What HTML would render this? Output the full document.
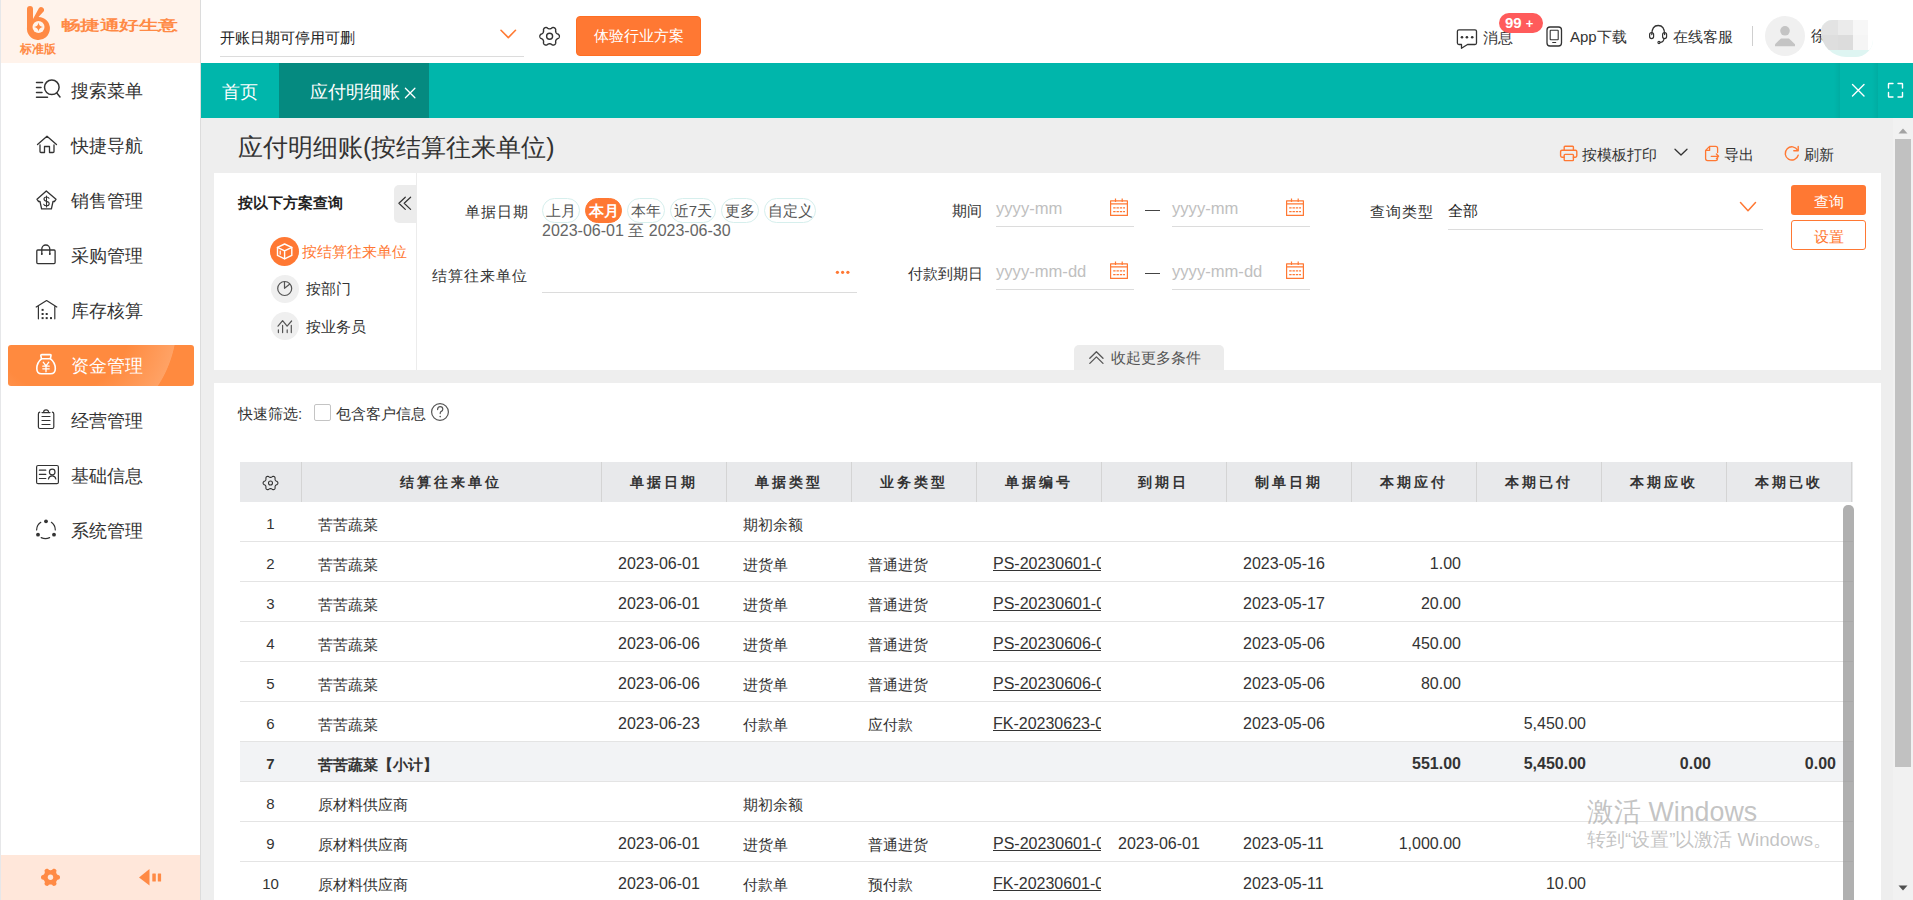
<!DOCTYPE html>
<html><head><meta charset="utf-8">
<style>
*{box-sizing:border-box;margin:0;padding:0}
html,body{width:1913px;height:900px;overflow:hidden}
body{position:relative;background:#eeeeee;font-family:"Liberation Sans",sans-serif;color:#333;font-size:15px}
.a{position:absolute;white-space:nowrap}
#sb{position:absolute;left:0;top:0;width:201px;height:900px;background:#fff;border-right:1px solid #dcdcdc}
#logo{position:absolute;left:0;top:0;width:200px;height:63px;background:#fff3eb}
.mi{position:absolute;left:0;width:200px;height:41px}
.mi .t{position:absolute;left:71px;top:1px;font-size:18px;color:#333;line-height:22px}
.mi svg{position:absolute;left:34px;top:8px}
#sbb{position:absolute;left:0;top:855px;width:200px;height:45px;background:#ffe7da}
#hd{position:absolute;left:201px;top:0;width:1712px;height:63px;background:#fff}
#tabs{position:absolute;left:201px;top:63px;width:1712px;height:55px;background:#00b6ab}
.panel{position:absolute;background:#fff}
.lbl{position:absolute;font-size:15px;color:#333;line-height:20px;white-space:nowrap}
.ul{position:absolute;height:1px;background:#dcdcdc}
.ph{position:absolute;font-size:16.6px;color:#c0c0c0;line-height:20px;padding-top:1px;white-space:nowrap}
.chip{position:absolute;top:198px;height:25px;border:1px solid #d6efed;border-radius:13px;font-size:15px;line-height:23px;color:#555;text-align:center}
.th{position:absolute;top:462px;height:40px;line-height:40px;text-align:center;font-size:14px;font-weight:bold;color:#333;letter-spacing:3px;white-space:nowrap}
.td{position:absolute;height:40px;line-height:40px;padding-top:3px;font-size:15px;color:#333;white-space:nowrap}
.num{font-size:16px;padding-top:2px}
</style></head><body>

<!-- SIDEBAR -->
<div id="sb">
  <div id="logo">
    <div class="a" style="left:61px;top:14px;font-size:19px;font-weight:bold;color:#ff8a45;line-height:24px;transform-origin:0 50%;transform:scale(1.02,0.72)">畅捷通好生意</div>
    <div class="a" style="left:20px;top:41px;font-size:12px;font-weight:bold;color:#ff8a45;line-height:16px">标准版</div>
  </div>
  <div class="a" style="left:8px;top:345px;width:186px;height:41px;border-radius:3px;background:radial-gradient(circle 116.4px at 52.8px -22.6px,#ff8a3f 0px,#ff8a3f 70px,#ffa265 115.6px,#ff8a3f 116.4px)"></div>
  <div class="mi" style="top:79px"><div class="t">搜索菜单</div></div>
  <div class="mi" style="top:134px"><div class="t">快捷导航</div></div>
  <div class="mi" style="top:189px"><div class="t">销售管理</div></div>
  <div class="mi" style="top:244px"><div class="t">采购管理</div></div>
  <div class="mi" style="top:299px"><div class="t">库存核算</div></div>
  <div class="mi" style="top:354px"><div class="t" style="color:#fff">资金管理</div></div>
  <div class="mi" style="top:409px"><div class="t">经营管理</div></div>
  <div class="mi" style="top:464px"><div class="t">基础信息</div></div>
  <div class="mi" style="top:519px"><div class="t">系统管理</div></div>
  <div id="sbb"></div>
</div>

<!-- HEADER -->
<div id="hd">
  <div class="a" style="left:19px;top:28px;font-size:15px;color:#222;line-height:20px">开账日期可停用可删</div>
  <div class="a" style="left:19px;top:56px;width:304px;height:1px;background:#dcdcdc"></div>
  <div class="a" style="left:375px;top:16px;width:125px;height:40px;background:#ff7833;border:1px solid #ff6e22;border-radius:4px;color:#fff;font-size:15px;line-height:38px;text-align:center">体验行业方案</div>
  <div class="a" style="left:1282px;top:28px;font-size:15px;color:#333;line-height:20px">消息</div>
  <div class="a" style="left:1298px;top:13px;width:44px;height:20px;background:#ff5b5b;border-radius:10px;color:#fff;font-size:15px;font-weight:bold;line-height:20px;text-align:left;padding-left:6px">99<span style="font-size:13px;margin-left:4px">+</span></div>
  <div class="a" style="left:1369px;top:27px;font-size:15px;color:#333;line-height:20px">App下载</div>
  <div class="a" style="left:1472px;top:27px;font-size:15px;color:#333;line-height:20px">在线客服</div>
  <div class="a" style="left:1551px;top:26px;width:1px;height:20px;background:#cfcfcf"></div>
  <div class="a" style="left:1564px;top:16px;width:40px;height:40px;border-radius:20px;background:#f0f0f0"></div>
  <div class="a" style="left:1610px;top:26px;font-size:15px;color:#333;line-height:20px">徐</div>
  <div class="a" style="left:1620px;top:20px;width:52px;height:37px;border-radius:12px 0 18px 26px;overflow:hidden;background:#def5f2">
    <div class="a" style="left:0;top:0;width:17px;height:15px;background:#e3e3e3"></div>
    <div class="a" style="left:17px;top:0;width:15px;height:15px;background:#ebebeb"></div>
    <div class="a" style="left:32px;top:0;width:15px;height:15px;background:#f7f7f7"></div>
    <div class="a" style="left:0;top:15px;width:17px;height:15px;background:#dedede"></div>
    <div class="a" style="left:17px;top:15px;width:15px;height:15px;background:#dcdcdc"></div>
    <div class="a" style="left:32px;top:15px;width:15px;height:15px;background:#f5f5f5"></div>
    <div class="a" style="left:47px;top:0;width:5px;height:30px;background:#fff"></div>
  </div>
</div>

<!-- TABS -->
<div id="tabs">
  <div class="a" style="left:21px;top:17px;font-size:18px;color:#fff;line-height:24px">首页</div>
  <div class="a" style="left:78px;top:0;width:150px;height:55px;background:#058a80"></div>
  <div class="a" style="left:1633px;top:0;width:6px;height:55px;background:linear-gradient(90deg,rgba(0,0,0,0),rgba(0,0,0,0.05))"></div>
  <div class="a" style="left:1671px;top:0;width:6px;height:55px;background:linear-gradient(90deg,rgba(0,0,0,0),rgba(0,0,0,0.05))"></div>
  <div class="a" style="left:109px;top:17px;font-size:18px;color:#fff;line-height:24px">应付明细账</div>
</div>

<!-- CONTENT -->
<div class="a" style="left:238px;top:130px;font-size:25px;color:#333;line-height:34px">应付明细账(按结算往来单位)</div>

<div class="panel" style="left:214px;top:173px;width:1667px;height:197px"></div>
<!-- FILTER PANEL -->
<div class="a" style="left:416px;top:173px;width:1px;height:197px;background:#ececec"></div>
<div class="lbl" style="left:238px;top:193px;font-weight:bold;color:#222">按以下方案查询</div>
<div class="a" style="left:394px;top:185px;width:22px;height:38px;background:#ececec;border-radius:5px 0 0 5px"></div>
<div class="a" style="left:270px;top:237px;width:29px;height:29px;border-radius:50%;background:#ff7833"></div>
<div class="lbl" style="left:302px;top:242px;color:#ff7833">按结算往来单位</div>
<div class="a" style="left:271px;top:275px;width:28px;height:28px;border-radius:50%;background:#efefef"></div>
<div class="lbl" style="left:306px;top:279px;color:#333">按部门</div>
<div class="a" style="left:271px;top:312px;width:28px;height:28px;border-radius:50%;background:#efefef"></div>
<div class="lbl" style="left:306px;top:317px;color:#333">按业务员</div>

<div class="lbl" style="left:465px;top:202px;letter-spacing:1px">单据日期</div>
<div class="chip" style="left:542px;width:38px">上月</div>
<div class="chip" style="left:585px;width:37px;background:#ff7833;border-color:#ff7833;color:#fff;font-weight:bold">本月</div>
<div class="chip" style="left:627px;width:38px">本年</div>
<div class="chip" style="left:670px;width:46px">近7天</div>
<div class="chip" style="left:721px;width:38px">更多</div>
<div class="chip" style="left:764px;width:52px">自定义</div>
<div class="lbl" style="left:542px;top:221px;font-size:16px;color:#666">2023-06-01 至 2023-06-30</div>

<div class="lbl" style="left:432px;top:266px;letter-spacing:1px">结算往来单位</div>
<div class="ul" style="left:542px;top:292px;width:315px"></div>

<div class="lbl" style="left:952px;top:201px">期间</div>
<div class="ph" style="left:996px;top:198px">yyyy-mm</div>
<div class="ul" style="left:996px;top:226px;width:138px"></div>
<div class="a" style="left:1145px;top:210px;width:15px;height:1px;background:#444"></div>
<div class="ph" style="left:1172px;top:198px">yyyy-mm</div>
<div class="ul" style="left:1172px;top:226px;width:138px"></div>

<div class="lbl" style="left:908px;top:264px">付款到期日</div>
<div class="ph" style="left:996px;top:261px">yyyy-mm-dd</div>
<div class="ul" style="left:996px;top:289px;width:138px"></div>
<div class="a" style="left:1145px;top:273px;width:15px;height:1px;background:#444"></div>
<div class="ph" style="left:1172px;top:261px">yyyy-mm-dd</div>
<div class="ul" style="left:1172px;top:289px;width:138px"></div>

<div class="lbl" style="left:1370px;top:202px;letter-spacing:1px">查询类型</div>
<div class="lbl" style="left:1448px;top:201px;color:#222">全部</div>
<div class="ul" style="left:1448px;top:229px;width:315px"></div>

<div class="a" style="left:1791px;top:185px;width:75px;height:30px;background:#ff7833;border-radius:3px;color:#fff;font-size:15px;line-height:30px;padding-top:2px;text-align:center">查询</div>
<div class="a" style="left:1791px;top:220px;width:75px;height:30px;background:#fff;border:1px solid #ff7833;border-radius:3px;color:#ff7833;font-size:15px;line-height:28px;padding-top:2px;text-align:center">设置</div>

<div class="a" style="left:1074px;top:345px;width:150px;height:25px;background:#ececec;border-radius:5px 5px 0 0"></div>
<div class="lbl" style="left:1111px;top:348px;font-size:15px;color:#555">收起更多条件</div>

<!-- toolbar -->
<div class="lbl" style="left:1582px;top:145px;color:#333">按模板打印</div>
<div class="lbl" style="left:1724px;top:145px;color:#333">导出</div>
<div class="lbl" style="left:1804px;top:145px;color:#333">刷新</div>
<div class="panel" style="left:214px;top:383px;width:1667px;height:517px"></div>
<!-- TABLE PANEL -->
<div class="lbl" style="left:238px;top:404px;font-size:15px">快速筛选:</div>
<div class="a" style="left:314px;top:404px;width:17px;height:17px;border:1px solid #c4c4c4;border-radius:2px;background:#fff"></div>
<div class="lbl" style="left:336px;top:404px;font-size:15px">包含客户信息</div>
<div class="a" style="left:240px;top:462px;width:1613px;height:40px;background:#e8e9eb"></div>
<div class="a" style="left:301px;top:462px;width:1px;height:40px;background:#d4d4d4"></div>
<div class="th" style="left:301px;width:300px">结算往来单位</div>
<div class="a" style="left:601px;top:462px;width:1px;height:40px;background:#d4d4d4"></div>
<div class="th" style="left:601px;width:125px">单据日期</div>
<div class="a" style="left:726px;top:462px;width:1px;height:40px;background:#d4d4d4"></div>
<div class="th" style="left:726px;width:125px">单据类型</div>
<div class="a" style="left:851px;top:462px;width:1px;height:40px;background:#d4d4d4"></div>
<div class="th" style="left:851px;width:125px">业务类型</div>
<div class="a" style="left:976px;top:462px;width:1px;height:40px;background:#d4d4d4"></div>
<div class="th" style="left:976px;width:125px">单据编号</div>
<div class="a" style="left:1101px;top:462px;width:1px;height:40px;background:#d4d4d4"></div>
<div class="th" style="left:1101px;width:125px">到期日</div>
<div class="a" style="left:1226px;top:462px;width:1px;height:40px;background:#d4d4d4"></div>
<div class="th" style="left:1226px;width:125px">制单日期</div>
<div class="a" style="left:1351px;top:462px;width:1px;height:40px;background:#d4d4d4"></div>
<div class="th" style="left:1351px;width:125px">本期应付</div>
<div class="a" style="left:1476px;top:462px;width:1px;height:40px;background:#d4d4d4"></div>
<div class="th" style="left:1476px;width:125px">本期已付</div>
<div class="a" style="left:1601px;top:462px;width:1px;height:40px;background:#d4d4d4"></div>
<div class="th" style="left:1601px;width:125px">本期应收</div>
<div class="a" style="left:1726px;top:462px;width:1px;height:40px;background:#d4d4d4"></div>
<div class="th" style="left:1726px;width:125px">本期已收</div>
<div class="a" style="left:1851px;top:462px;width:1px;height:40px;background:#d4d4d4"></div>
<div class="a" style="left:240px;top:541px;width:1613px;height:1px;background:#e4e4e4"></div>
<div class="td" style="left:240px;top:502px;width:61px;text-align:center;padding-top:2px">1</div>
<div class="td" style="left:318px;top:502px">苦苦蔬菜</div>
<div class="td" style="left:743px;top:502px">期初余额</div>
<div class="a" style="left:240px;top:581px;width:1613px;height:1px;background:#e4e4e4"></div>
<div class="td" style="left:240px;top:542px;width:61px;text-align:center;padding-top:2px">2</div>
<div class="td" style="left:318px;top:542px">苦苦蔬菜</div>
<div class="td num" style="left:618px;top:542px">2023-06-01</div>
<div class="td" style="left:743px;top:542px">进货单</div>
<div class="td" style="left:868px;top:542px">普通进货</div>
<div class="td num" style="left:993px;top:542px;width:108px;overflow:hidden;text-decoration:underline">PS-20230601-0</div>
<div class="td num" style="left:1243px;top:542px">2023-05-16</div>
<div class="td num" style="left:1351px;top:542px;width:110px;text-align:right">1.00</div>
<div class="a" style="left:240px;top:621px;width:1613px;height:1px;background:#e4e4e4"></div>
<div class="td" style="left:240px;top:582px;width:61px;text-align:center;padding-top:2px">3</div>
<div class="td" style="left:318px;top:582px">苦苦蔬菜</div>
<div class="td num" style="left:618px;top:582px">2023-06-01</div>
<div class="td" style="left:743px;top:582px">进货单</div>
<div class="td" style="left:868px;top:582px">普通进货</div>
<div class="td num" style="left:993px;top:582px;width:108px;overflow:hidden;text-decoration:underline">PS-20230601-0</div>
<div class="td num" style="left:1243px;top:582px">2023-05-17</div>
<div class="td num" style="left:1351px;top:582px;width:110px;text-align:right">20.00</div>
<div class="a" style="left:240px;top:661px;width:1613px;height:1px;background:#e4e4e4"></div>
<div class="td" style="left:240px;top:622px;width:61px;text-align:center;padding-top:2px">4</div>
<div class="td" style="left:318px;top:622px">苦苦蔬菜</div>
<div class="td num" style="left:618px;top:622px">2023-06-06</div>
<div class="td" style="left:743px;top:622px">进货单</div>
<div class="td" style="left:868px;top:622px">普通进货</div>
<div class="td num" style="left:993px;top:622px;width:108px;overflow:hidden;text-decoration:underline">PS-20230606-0</div>
<div class="td num" style="left:1243px;top:622px">2023-05-06</div>
<div class="td num" style="left:1351px;top:622px;width:110px;text-align:right">450.00</div>
<div class="a" style="left:240px;top:701px;width:1613px;height:1px;background:#e4e4e4"></div>
<div class="td" style="left:240px;top:662px;width:61px;text-align:center;padding-top:2px">5</div>
<div class="td" style="left:318px;top:662px">苦苦蔬菜</div>
<div class="td num" style="left:618px;top:662px">2023-06-06</div>
<div class="td" style="left:743px;top:662px">进货单</div>
<div class="td" style="left:868px;top:662px">普通进货</div>
<div class="td num" style="left:993px;top:662px;width:108px;overflow:hidden;text-decoration:underline">PS-20230606-0</div>
<div class="td num" style="left:1243px;top:662px">2023-05-06</div>
<div class="td num" style="left:1351px;top:662px;width:110px;text-align:right">80.00</div>
<div class="a" style="left:240px;top:741px;width:1613px;height:1px;background:#e4e4e4"></div>
<div class="td" style="left:240px;top:702px;width:61px;text-align:center;padding-top:2px">6</div>
<div class="td" style="left:318px;top:702px">苦苦蔬菜</div>
<div class="td num" style="left:618px;top:702px">2023-06-23</div>
<div class="td" style="left:743px;top:702px">付款单</div>
<div class="td" style="left:868px;top:702px">应付款</div>
<div class="td num" style="left:993px;top:702px;width:108px;overflow:hidden;text-decoration:underline">FK-20230623-0</div>
<div class="td num" style="left:1243px;top:702px">2023-05-06</div>
<div class="td num" style="left:1476px;top:702px;width:110px;text-align:right">5,450.00</div>
<div class="a" style="left:240px;top:742px;width:1613px;height:40px;background:#f2f3f5"></div>
<div class="a" style="left:240px;top:781px;width:1613px;height:1px;background:#e4e4e4"></div>
<div class="td" style="left:240px;top:742px;width:61px;text-align:center;padding-top:2px;font-weight:bold">7</div>
<div class="td" style="left:318px;top:742px;font-weight:bold">苦苦蔬菜【小计】</div>
<div class="td num" style="left:1351px;top:742px;width:110px;text-align:right;font-weight:bold">551.00</div>
<div class="td num" style="left:1476px;top:742px;width:110px;text-align:right;font-weight:bold">5,450.00</div>
<div class="td num" style="left:1601px;top:742px;width:110px;text-align:right;font-weight:bold">0.00</div>
<div class="td num" style="left:1726px;top:742px;width:110px;text-align:right;font-weight:bold">0.00</div>
<div class="a" style="left:240px;top:821px;width:1613px;height:1px;background:#e4e4e4"></div>
<div class="td" style="left:240px;top:782px;width:61px;text-align:center;padding-top:2px">8</div>
<div class="td" style="left:318px;top:782px">原材料供应商</div>
<div class="td" style="left:743px;top:782px">期初余额</div>
<div class="a" style="left:240px;top:861px;width:1613px;height:1px;background:#e4e4e4"></div>
<div class="td" style="left:240px;top:822px;width:61px;text-align:center;padding-top:2px">9</div>
<div class="td" style="left:318px;top:822px">原材料供应商</div>
<div class="td num" style="left:618px;top:822px">2023-06-01</div>
<div class="td" style="left:743px;top:822px">进货单</div>
<div class="td" style="left:868px;top:822px">普通进货</div>
<div class="td num" style="left:993px;top:822px;width:108px;overflow:hidden;text-decoration:underline">PS-20230601-0</div>
<div class="td num" style="left:1118px;top:822px">2023-06-01</div>
<div class="td num" style="left:1243px;top:822px">2023-05-11</div>
<div class="td num" style="left:1351px;top:822px;width:110px;text-align:right">1,000.00</div>
<div class="a" style="left:240px;top:901px;width:1613px;height:1px;background:#e4e4e4"></div>
<div class="td" style="left:240px;top:862px;width:61px;text-align:center;padding-top:2px">10</div>
<div class="td" style="left:318px;top:862px">原材料供应商</div>
<div class="td num" style="left:618px;top:862px">2023-06-01</div>
<div class="td" style="left:743px;top:862px">付款单</div>
<div class="td" style="left:868px;top:862px">预付款</div>
<div class="td num" style="left:993px;top:862px;width:108px;overflow:hidden;text-decoration:underline">FK-20230601-0</div>
<div class="td num" style="left:1243px;top:862px">2023-05-11</div>
<div class="td num" style="left:1476px;top:862px;width:110px;text-align:right">10.00</div>
<div class="a" style="left:1843px;top:505px;width:11px;height:400px;border-radius:5px;background:rgba(150,150,150,0.75)"></div>

<div class="a" style="left:1587px;top:795px;font-size:26.8px;color:rgba(170,170,170,0.7);line-height:34px;z-index:5">激活 Windows</div>
<div class="a" style="left:1587px;top:829px;font-size:18.6px;color:rgba(170,170,170,0.7);line-height:22px;z-index:5">转到“设置”以激活 Windows。</div>
<div class="a" style="left:0;top:0;width:1px;height:900px;background:#e6e7e9;z-index:6"></div>
<!-- page scrollbar -->
<div class="a" style="left:1893px;top:118px;width:20px;height:782px;background:#f1f1f1"></div>
<div class="a" style="left:1895px;top:139px;width:16px;height:628px;background:#c1c1c1"></div>


<!-- ICON OVERLAY -->
<svg class="a" style="left:0;top:0;z-index:10" width="1913" height="900" viewBox="0 0 1913 900" fill="none" stroke-linecap="round" stroke-linejoin="round">
 <!-- logo -->
 <g fill="#ff8a45">
  <path d="M27,9 a3,3 0 0 1 6,0 V19 L39,8 a3,3 0 0 1 5,3 L38.5,17 A11.5,11.5 0 1 1 27,27 Z"/>
  <circle cx="38.5" cy="27" r="6" fill="#fff3eb"/>
  <path d="M38.5,22.5 Q39,26.5 43,27 Q39,27.5 38.5,31.5 Q38,27.5 34,27 Q38,26.5 38.5,22.5Z"/>
 </g>
 <!-- sidebar icons -->
 <g stroke="#333" stroke-width="1.5">
  <path d="M36.5,82.5H42.5M36.5,87.5H41M36.5,92.5H42M36.5,97.2H47.5"/>
  <circle cx="51.8" cy="87.3" r="7.3"/>
  <path d="M56.8,93 L60,97"/>
  <path d="M37.5,144.5 L47,136.2 L56.5,144.5 M40,145 V151.5 Q40,152.5 41,152.5 H44.5 V146.5 H49.5 V152.5 H53 Q54,152.5 54,151.5 V145" stroke-width="1.3"/>
  <path d="M46.3,191 L37,199.3 L38.6,201.5 H40 L41.6,208.8 H51.4 L53,201.5 H54.4 L56,199.3 Z" stroke-width="1.3"/>
  <path d="M49,198.3 Q48.3,197 46.5,197 Q44,197 44,199 Q44,200.8 46.5,201.3 Q49.2,201.8 49.2,203.8 Q49.2,205.8 46.5,205.8 Q44.3,205.8 43.8,204.3 M46.5,196 V207" stroke-width="1.1"/>
  <rect x="36.8" y="250" width="18.3" height="13.6" rx="1" stroke-width="1.3"/>
  <path d="M41.8,254 V249 A4,4 0 0 1 49.8,249 V254" stroke-width="1.3"/>
  <circle cx="41.8" cy="254" r="0.9" fill="#333" stroke="none"/><circle cx="49.8" cy="254" r="0.9" fill="#333" stroke="none"/>
  <path d="M36.2,307 L46.6,300.5 L56.8,307 M38.4,306.5 V318.8 M54.8,306.5 V318.8" stroke-width="1.2"/>
 </g>
 <g fill="#333">
  <rect x="41.6" y="308.9" width="2" height="2"/><rect x="41.6" y="313" width="2" height="2"/><rect x="45.7" y="313" width="2" height="2"/>
  <rect x="41.6" y="317.1" width="2" height="2"/><rect x="45.7" y="317.1" width="2" height="2"/><rect x="50" y="317.1" width="2" height="2"/>
 </g>
 <g stroke="#fff" stroke-width="1.6">
  <path d="M41.5,358.8 L40.8,355.5 Q40.8,354.6 41.8,354.6 H50.2 Q51.2,354.6 51,355.5 L50.3,358.8 Z"/>
  <path d="M41.5,358.8 Q36.8,362.5 36.8,368.5 Q36.8,373.8 41.5,373.8 H50.5 Q55.3,373.8 55.3,368.5 Q55.3,362.5 50.5,358.8"/>
  <path d="M43.2,362.2 L46,365.8 L48.8,362.2 M46,365.8 V371.8 M42.8,366.2 H49.2 M42.8,368.8 H49.2" stroke-width="1.3"/>
 </g>
 <g stroke="#333" stroke-width="1.2">
  <path d="M39.8,412.2 Q38.4,412.6 38.4,414 V427 Q38.4,428.5 40,428.5 H52.3 Q53.8,428.5 53.8,427 V414 Q53.8,412.6 52.4,412.2"/>
  <path d="M42,412.6 H50 M43.6,412.3 A2.5,2.5 0 0 1 48.6,412.3"/>
  <path d="M42,416.5 H50 M42,420.5 H50 M42,424.5 H50"/>
  <rect x="36.6" y="465.5" width="21.8" height="18.2" rx="1.5"/>
  <path d="M39.4,470.2 H45.8 M39.4,474.4 H45.8 M39.4,478.5 H45.8"/>
  <circle cx="52.2" cy="472" r="2.8"/>
  <path d="M48.5,479 A3.7,3.7 0 0 1 55.8,479"/>
  <path d="M36.6,530 A9.6,9.6 0 0 1 40.8,522.3 M51.4,522.3 A9.6,9.6 0 0 1 55.3,530 M41.2,537.6 Q45.5,539.5 49.6,537.6"/>
 </g>
 <g fill="#333"><circle cx="46" cy="521.3" r="1.9"/><circle cx="38" cy="534.7" r="1.9"/><circle cx="54" cy="534.7" r="1.9"/></g>
 <!-- sidebar bottom -->
 <g fill="#ff8a45">
  <path d="M60.00,877.30 L59.98,877.63 L59.92,877.96 L59.83,878.28 L59.69,878.59 L59.51,878.89 L59.27,879.16 L58.93,879.40 L58.11,879.48 L57.76,879.66 L57.50,879.85 L57.29,880.04 L57.10,880.24 L56.93,880.44 L56.78,880.64 L56.65,880.85 L56.53,881.07 L56.43,881.30 L56.34,881.54 L56.27,881.81 L56.21,882.09 L56.17,882.41 L56.19,882.80 L56.54,883.55 L56.50,883.96 L56.38,884.31 L56.21,884.61 L56.01,884.89 L55.78,885.13 L55.53,885.35 L55.25,885.53 L54.95,885.68 L54.64,885.79 L54.31,885.87 L53.98,885.91 L53.63,885.90 L53.27,885.83 L52.89,885.65 L52.41,884.98 L52.09,884.77 L51.79,884.64 L51.52,884.55 L51.25,884.48 L51.00,884.44 L50.75,884.41 L50.50,884.40 L50.25,884.41 L50.00,884.44 L49.75,884.48 L49.48,884.55 L49.21,884.64 L48.91,884.77 L48.59,884.98 L48.11,885.65 L47.73,885.83 L47.37,885.90 L47.02,885.91 L46.69,885.87 L46.36,885.79 L46.05,885.68 L45.75,885.53 L45.47,885.35 L45.22,885.13 L44.99,884.89 L44.79,884.61 L44.62,884.31 L44.50,883.96 L44.46,883.55 L44.81,882.80 L44.83,882.41 L44.79,882.09 L44.73,881.81 L44.66,881.54 L44.57,881.30 L44.47,881.07 L44.35,880.85 L44.22,880.64 L44.07,880.44 L43.90,880.24 L43.71,880.04 L43.50,879.85 L43.24,879.66 L42.89,879.48 L42.07,879.40 L41.73,879.16 L41.49,878.89 L41.31,878.59 L41.17,878.28 L41.08,877.96 L41.02,877.63 L41.00,877.30 L41.02,876.97 L41.08,876.64 L41.17,876.32 L41.31,876.01 L41.49,875.71 L41.73,875.44 L42.07,875.20 L42.89,875.12 L43.24,874.94 L43.50,874.75 L43.71,874.56 L43.90,874.36 L44.07,874.16 L44.22,873.96 L44.35,873.75 L44.47,873.53 L44.57,873.30 L44.66,873.06 L44.73,872.79 L44.79,872.51 L44.83,872.19 L44.81,871.80 L44.46,871.05 L44.50,870.64 L44.62,870.29 L44.79,869.99 L44.99,869.71 L45.22,869.47 L45.47,869.25 L45.75,869.07 L46.05,868.92 L46.36,868.81 L46.69,868.73 L47.02,868.69 L47.37,868.70 L47.73,868.77 L48.11,868.95 L48.59,869.62 L48.91,869.83 L49.21,869.96 L49.48,870.05 L49.75,870.12 L50.00,870.16 L50.25,870.19 L50.50,870.20 L50.75,870.19 L51.00,870.16 L51.25,870.12 L51.52,870.05 L51.79,869.96 L52.09,869.83 L52.41,869.62 L52.89,868.95 L53.27,868.77 L53.63,868.70 L53.98,868.69 L54.31,868.73 L54.64,868.81 L54.95,868.92 L55.25,869.07 L55.53,869.25 L55.78,869.47 L56.01,869.71 L56.21,869.99 L56.38,870.29 L56.50,870.64 L56.54,871.05 L56.19,871.80 L56.17,872.19 L56.21,872.51 L56.27,872.79 L56.34,873.06 L56.43,873.30 L56.53,873.53 L56.65,873.75 L56.78,873.96 L56.93,874.16 L57.10,874.36 L57.29,874.56 L57.50,874.75 L57.76,874.94 L58.11,875.12 L58.93,875.20 L59.27,875.44 L59.51,875.71 L59.69,876.01 L59.83,876.32 L59.92,876.64 L59.98,876.97Z"/>
  <circle cx="50.5" cy="877.3" r="2.7" fill="#ffe7da"/>
  <path d="M139,877.5 L149.5,869 V885.5 Z"/>
  <rect x="152.3" y="873.5" width="3.5" height="8" rx="0.5"/><rect x="157.8" y="873.5" width="3.3" height="8" rx="0.5"/>
 </g>
 <!-- header icons -->
 <path d="M501,30.3 L508.3,37.6 L515.5,30.3" stroke="#ff7a33" stroke-width="1.6"/>
 <g stroke="#333" stroke-width="1.4">
  <path d="M559.35,36.30 L559.33,36.64 L559.26,36.98 L559.14,37.30 L558.98,37.62 L558.77,37.92 L558.51,38.19 L558.17,38.44 L557.64,38.61 L557.30,38.80 L557.02,39.00 L556.77,39.20 L556.55,39.39 L556.36,39.60 L556.19,39.81 L556.05,40.02 L555.93,40.26 L555.83,40.51 L555.76,40.77 L555.69,41.06 L555.65,41.37 L555.62,41.72 L555.62,42.11 L555.74,42.66 L555.69,43.07 L555.58,43.43 L555.43,43.76 L555.24,44.06 L555.01,44.32 L554.76,44.55 L554.48,44.74 L554.17,44.89 L553.84,45.00 L553.50,45.06 L553.15,45.08 L552.78,45.05 L552.41,44.96 L552.04,44.79 L551.62,44.41 L551.28,44.22 L550.97,44.07 L550.68,43.96 L550.40,43.87 L550.12,43.80 L549.86,43.76 L549.60,43.75 L549.34,43.76 L549.08,43.80 L548.80,43.87 L548.52,43.96 L548.23,44.07 L547.92,44.22 L547.58,44.41 L547.16,44.79 L546.79,44.96 L546.42,45.05 L546.05,45.08 L545.70,45.06 L545.36,45.00 L545.03,44.89 L544.73,44.74 L544.44,44.55 L544.19,44.32 L543.96,44.06 L543.77,43.76 L543.62,43.43 L543.51,43.07 L543.46,42.66 L543.58,42.11 L543.58,41.72 L543.55,41.37 L543.51,41.06 L543.44,40.77 L543.37,40.51 L543.27,40.26 L543.15,40.02 L543.01,39.81 L542.84,39.60 L542.65,39.39 L542.43,39.20 L542.18,39.00 L541.90,38.80 L541.56,38.61 L541.03,38.44 L540.69,38.19 L540.43,37.92 L540.22,37.62 L540.06,37.30 L539.94,36.98 L539.87,36.64 L539.85,36.30 L539.87,35.96 L539.94,35.62 L540.06,35.30 L540.22,34.98 L540.43,34.68 L540.69,34.41 L541.03,34.16 L541.56,33.99 L541.90,33.80 L542.18,33.60 L542.43,33.40 L542.65,33.21 L542.84,33.00 L543.01,32.79 L543.15,32.57 L543.27,32.34 L543.37,32.09 L543.44,31.83 L543.51,31.54 L543.55,31.23 L543.58,30.88 L543.58,30.49 L543.46,29.94 L543.51,29.53 L543.62,29.17 L543.77,28.84 L543.96,28.54 L544.19,28.28 L544.44,28.05 L544.73,27.86 L545.03,27.71 L545.36,27.60 L545.70,27.54 L546.05,27.52 L546.42,27.55 L546.79,27.64 L547.16,27.81 L547.58,28.19 L547.92,28.38 L548.23,28.53 L548.52,28.64 L548.80,28.73 L549.08,28.80 L549.34,28.84 L549.60,28.85 L549.86,28.84 L550.12,28.80 L550.40,28.73 L550.68,28.64 L550.97,28.53 L551.28,28.38 L551.62,28.19 L552.04,27.81 L552.41,27.64 L552.78,27.55 L553.15,27.52 L553.50,27.54 L553.84,27.60 L554.17,27.71 L554.48,27.86 L554.76,28.05 L555.01,28.28 L555.24,28.54 L555.43,28.84 L555.58,29.17 L555.69,29.53 L555.74,29.94 L555.62,30.49 L555.62,30.88 L555.65,31.23 L555.69,31.54 L555.76,31.83 L555.83,32.09 L555.93,32.34 L556.05,32.57 L556.19,32.79 L556.36,33.00 L556.55,33.21 L556.77,33.40 L557.02,33.60 L557.30,33.80 L557.64,33.99 L558.17,34.16 L558.51,34.41 L558.77,34.68 L558.98,34.98 L559.14,35.30 L559.26,35.62 L559.33,35.96Z"/>
  <circle cx="549.6" cy="36.3" r="3"/>
  <path d="M1461.5,44.5 H1459 Q1457.4,44.5 1457.4,43 V31.3 Q1457.4,29.8 1459,29.8 H1475 Q1476.5,29.8 1476.5,31.3 V43 Q1476.5,44.5 1475,44.5 H1467.5 L1461.5,48.3 Z" stroke-width="1.3"/>
  <rect x="1547" y="27" width="14.5" height="19" rx="3" stroke-width="1.3"/>
  <rect x="1550.2" y="30.2" width="8" height="9.6" rx="0.5" stroke-width="1.1"/>
  <path d="M1552.7,42.5 H1555.7" stroke-width="1.1"/>
  <path d="M1651.8,34.5 Q1651.8,25.5 1658.2,25.5 Q1664.6,25.5 1664.6,34.5" stroke-width="1.3"/>
  <rect x="1649.6" y="32.6" width="4" height="6" rx="2" stroke-width="1.2"/>
  <rect x="1662.6" y="32.6" width="4" height="6" rx="2" stroke-width="1.2"/>
  <path d="M1664,38.6 Q1663.5,42.2 1660,42.5" stroke-width="1.2"/>
  <circle cx="1659" cy="42.5" r="1.1" stroke-width="1.1"/>
 </g>
 <g fill="#333"><circle cx="1462" cy="37.3" r="1.3"/><circle cx="1466.9" cy="37.3" r="1.3"/><circle cx="1472.2" cy="37.3" r="1.3"/></g>
 <g fill="#c4c4c4">
  <circle cx="1785" cy="30.8" r="4.8"/>
  <path d="M1775,46.2 V44.2 L1781,38.4 H1789 L1795,44.2 V46.2 Z"/>
 </g>

 <!-- filter icons -->
 <path d="M405.3,197.2 L398.9,203.3 L405.3,209.4 M410.6,197.2 L404.2,203.3 L410.6,209.4" stroke="#333" stroke-width="1.2"/>
 <g stroke="#fff" stroke-width="1.4">
  <path d="M284.6,244 L291.8,247.4 V255.4 L284.6,258.8 L277.5,255.4 V247.4 Z"/>
  <path d="M277.5,247.4 L284.6,250.8 L291.8,247.4 M284.6,250.8 V258.8"/>
  <path d="M280.2,251 V254.2" stroke-width="1.2"/>
 </g>
 <g stroke="#555" stroke-width="1.2">
  <circle cx="284.7" cy="288.5" r="7"/>
  <path d="M284.5,281.8 V288.3 L289.6,284.2"/>
  <path d="M278,326.2 L282.6,320.6 L287.1,326.2 L291.6,321"/>
  <path d="M278.4,329.8 V332.6 M282.6,325.4 V332.6 M287.2,329.8 V332.6 M291.3,325.4 V332.6"/>
 </g>
 <g fill="#ff7833"><circle cx="837.4" cy="272.3" r="1.6"/><circle cx="842.6" cy="272.3" r="1.6"/><circle cx="847.9" cy="272.3" r="1.6"/></g>
 <g stroke="#ff7833" stroke-width="1.2" stroke-linecap="butt">
  <g id="cal"><rect x="1110.6" y="200.8" width="16.8" height="14.6"/><path d="M1110.6,203.8 H1127.4 M1115.5,198.4 V202 M1122.2,198.4 V202"/><path d="M1113.2,207.8 H1125 M1113.2,211.6 H1125" stroke-dasharray="2.4,0.9"/></g>
  <use href="#cal" x="176"/>
  <use href="#cal" y="63"/>
  <use href="#cal" x="176" y="63"/>
 </g>
 <path d="M1740.5,202.6 L1748,210.8 L1755.5,202.6" stroke="#ff7833" stroke-width="1.5"/>
 <path d="M1089.8,358.3 L1096.4,351.8 L1103,358.3 M1089.8,363.4 L1096.4,356.9 L1103,363.4" stroke="#555" stroke-width="1.3"/>
 <!-- toolbar icons -->
 <g stroke="#ff7833" stroke-width="1.4">
  <path d="M1564.2,150 V147 Q1564.2,146.2 1565,146.2 H1572.6 Q1573.4,146.2 1573.4,147 V150"/>
  <path d="M1564,157.2 H1562 Q1560.6,157.2 1560.6,155.8 V151.6 Q1560.6,150.2 1562,150.2 H1575.4 Q1576.8,150.2 1576.8,151.6 V155.8 Q1576.8,157.2 1575.4,157.2 H1573.4"/>
  <rect x="1564.2" y="154.4" width="9.2" height="6.2" rx="0.8"/>
  <path d="M1709.6,146.4 H1715.6 Q1717.6,146.4 1717.6,148.4 V152.6 M1717.6,158.6 Q1717.4,160.6 1715.6,160.6 H1707.6 Q1705.6,160.6 1705.6,158.6 V150.4 L1709.6,146.4 M1705.6,150.4 H1709.6 V146.4" stroke-width="1.3"/>
  <path d="M1711.2,156.3 H1718.6 M1716.4,154 L1718.6,156.3 L1716.4,158.6" stroke-width="1.3"/>
  <path d="M1797.6,150.2 A6.6,6.6 0 1 0 1798.2,155.2" stroke-width="1.4"/>
  <path d="M1798.2,146.4 V150.8 H1793.8" stroke-width="1.4"/>
 </g>
 <path d="M1675,149.2 L1681,155 L1687,149.2" stroke="#333" stroke-width="1.3"/>
 <!-- quick filter help -->
 <circle cx="440" cy="412" r="8.4" stroke="#555" stroke-width="1.2"/>
 <path d="M437.6,409.6 Q437.6,406.6 440.2,406.6 Q442.8,406.6 442.8,409.2 Q442.8,410.8 441,411.6 Q440.2,412.2 440.2,413.6" stroke="#555" stroke-width="1.2"/>
 <circle cx="440.2" cy="416.6" r="0.8" fill="#555"/>
 <!-- table header gear -->
 <g stroke="#333" stroke-width="1.1">
  <path d="M277.90,483.00 L277.88,483.26 L277.83,483.51 L277.74,483.76 L277.61,484.00 L277.45,484.22 L277.24,484.43 L276.99,484.62 L276.57,484.74 L276.31,484.89 L276.09,485.03 L275.90,485.18 L275.73,485.33 L275.58,485.48 L275.46,485.64 L275.35,485.80 L275.26,485.97 L275.19,486.16 L275.13,486.36 L275.09,486.58 L275.05,486.82 L275.04,487.08 L275.04,487.39 L275.14,487.81 L275.11,488.12 L275.03,488.40 L274.92,488.66 L274.78,488.89 L274.61,489.09 L274.41,489.26 L274.20,489.41 L273.97,489.52 L273.72,489.60 L273.46,489.65 L273.19,489.66 L272.91,489.63 L272.63,489.56 L272.34,489.43 L272.03,489.13 L271.77,488.97 L271.53,488.86 L271.31,488.76 L271.10,488.69 L270.89,488.64 L270.70,488.61 L270.50,488.60 L270.30,488.61 L270.11,488.64 L269.90,488.69 L269.69,488.76 L269.47,488.86 L269.23,488.97 L268.97,489.13 L268.66,489.43 L268.37,489.56 L268.09,489.63 L267.81,489.66 L267.54,489.65 L267.28,489.60 L267.03,489.52 L266.80,489.41 L266.59,489.26 L266.39,489.09 L266.22,488.89 L266.08,488.66 L265.97,488.40 L265.89,488.12 L265.86,487.81 L265.96,487.39 L265.96,487.08 L265.95,486.82 L265.91,486.58 L265.87,486.36 L265.81,486.16 L265.74,485.97 L265.65,485.80 L265.54,485.64 L265.42,485.48 L265.27,485.33 L265.10,485.18 L264.91,485.03 L264.69,484.89 L264.43,484.74 L264.01,484.62 L263.76,484.43 L263.55,484.22 L263.39,484.00 L263.26,483.76 L263.17,483.51 L263.12,483.26 L263.10,483.00 L263.12,482.74 L263.17,482.49 L263.26,482.24 L263.39,482.00 L263.55,481.78 L263.76,481.57 L264.01,481.38 L264.43,481.26 L264.69,481.11 L264.91,480.97 L265.10,480.82 L265.27,480.67 L265.42,480.52 L265.54,480.36 L265.65,480.20 L265.74,480.03 L265.81,479.84 L265.87,479.64 L265.91,479.42 L265.95,479.18 L265.96,478.92 L265.96,478.61 L265.86,478.19 L265.89,477.88 L265.97,477.60 L266.08,477.34 L266.22,477.11 L266.39,476.91 L266.59,476.74 L266.80,476.59 L267.03,476.48 L267.28,476.40 L267.54,476.35 L267.81,476.34 L268.09,476.37 L268.37,476.44 L268.66,476.57 L268.97,476.87 L269.23,477.03 L269.47,477.14 L269.69,477.24 L269.90,477.31 L270.11,477.36 L270.30,477.39 L270.50,477.40 L270.70,477.39 L270.89,477.36 L271.10,477.31 L271.31,477.24 L271.53,477.14 L271.77,477.03 L272.03,476.87 L272.34,476.57 L272.63,476.44 L272.91,476.37 L273.19,476.34 L273.46,476.35 L273.72,476.40 L273.97,476.48 L274.20,476.59 L274.41,476.74 L274.61,476.91 L274.78,477.11 L274.92,477.34 L275.03,477.60 L275.11,477.88 L275.14,478.19 L275.04,478.61 L275.04,478.92 L275.05,479.18 L275.09,479.42 L275.13,479.64 L275.19,479.84 L275.26,480.03 L275.35,480.20 L275.46,480.36 L275.58,480.52 L275.73,480.67 L275.90,480.82 L276.09,480.97 L276.31,481.11 L276.57,481.26 L276.99,481.38 L277.24,481.57 L277.45,481.78 L277.61,482.00 L277.74,482.24 L277.83,482.49 L277.88,482.74Z"/>
  <circle cx="270.5" cy="483" r="2"/>
 </g>
 <!-- page scrollbar arrows -->
 <path d="M1898.5,133.5 L1903,128.5 L1907.5,133.5Z" fill="#a3a3a3"/>
 <path d="M1898.5,885.5 L1903,890.5 L1907.5,885.5Z" fill="#505050"/>
 <path d="M405.4,88.2 L414.9,97.7 M414.9,88.2 L405.4,97.7" stroke="#fff" stroke-width="1.3"/>
 <!-- tab bar right -->
 <path d="M1852.5,84.5 L1864,96 M1864,84.5 L1852.5,96" stroke="#fff" stroke-width="1.4"/>
 <path d="M1888.5,88 V84 Q1888.5,83.5 1889,83.5 H1893 M1898,83.5 H1902 Q1902.5,83.5 1902.5,84 V88 M1902.5,92.5 V96.5 Q1902.5,97 1902,97 H1898 M1893,97 H1889 Q1888.5,97 1888.5,96.5 V92.5" stroke="#fff" stroke-width="1.4"/>
</svg>
</body></html>
